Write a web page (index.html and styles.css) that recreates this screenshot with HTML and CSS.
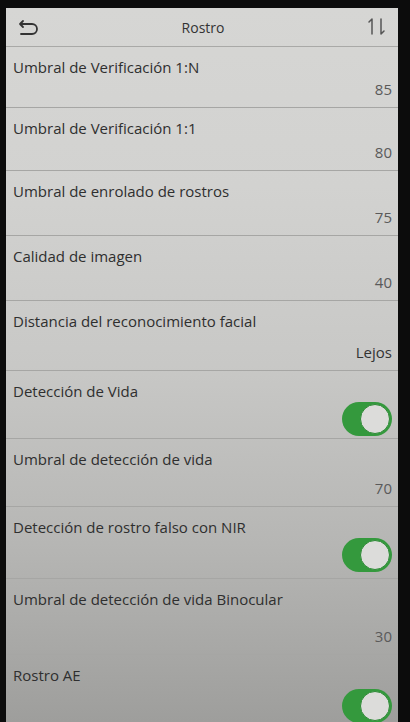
FILE: index.html
```html
<!DOCTYPE html>
<html lang="es">
<head>
<meta charset="utf-8">
<title>Rostro</title>
<link rel="stylesheet" href="styles.css">
</head>
<body>
<div class="screen">
  <header class="topbar">
    <svg class="back" width="22" height="16" viewBox="0 0 22 16"><path d="M5 2 L2 5 L5 8 M2 5 H14 A5 5 0 0 1 14 15 H3" fill="none" stroke="#333" stroke-width="1.8" stroke-linecap="round" stroke-linejoin="round"/></svg>
    <div class="title">Rostro</div>
    <svg class="sort" width="22" height="18" viewBox="0 0 22 18"><path d="M3 4 L6 1 V16 M15 1 V16 L18 13" fill="none" stroke="#555" stroke-width="1.5" stroke-linecap="round" stroke-linejoin="round"/></svg>
  </header>
  <div class="list">
    <div class="row r1"><div class="label">Umbral de Verificación 1:N</div><div class="value">85</div></div>
    <div class="row r2"><div class="label">Umbral de Verificación 1:1</div><div class="value">80</div></div>
    <div class="row r3"><div class="label">Umbral de enrolado de rostros</div><div class="value">75</div></div>
    <div class="row r4"><div class="label">Calidad de imagen</div><div class="value">40</div></div>
    <div class="row r5"><div class="label">Distancia del reconocimiento facial</div><div class="value dark">Lejos</div></div>
    <div class="row r6"><div class="label">Detección de Vida</div><div class="value"><span class="toggle"><span class="knob"></span></span></div></div>
    <div class="row r7"><div class="label">Umbral de detección de vida</div><div class="value">70</div></div>
    <div class="row r8"><div class="label">Detección de rostro falso con NIR</div><div class="value"><span class="toggle"><span class="knob"></span></span></div></div>
    <div class="row r9"><div class="label">Umbral de detección de vida Binocular</div><div class="value">30</div></div>
    <div class="row r10"><div class="label">Rostro AE</div><div class="value"><span class="toggle"><span class="knob"></span></span></div></div>
  </div>
</div>
</body>
</html>
```
FILE: styles.css
```css
html, body {
  margin: 0;
  padding: 0;
  background: #0c0c0c;
  width: 410px;
  height: 722px;
  overflow: hidden;
}
.screen {
  margin: 8px 12px 0 6px;
  height: 714px;
  background: linear-gradient(180deg, #d6d6d4 0%, #d2d2d0 25%, #c8c8c6 50%, #b6b6b4 75%, #9e9e9c 100%);
  font-family: "Open Sans", "DejaVu Sans", sans-serif;
  color: #2e2e2e;
  overflow: hidden;
}
.topbar {
  height: 38px;
  display: flex;
  align-items: center;
  padding: 0 10px 0 12px;
  border-bottom: 1px solid #a9a9a7;
}
.back { flex: none; }
.title {
  flex: 1;
  text-align: center;
  font-size: 14px;
  color: #333;
}
.sort { flex: none; }
.list { display: flex; flex-direction: column; }
.row {
  box-sizing: border-box;
  padding: 9px 6px 7px 7px;
  border-bottom: 1px solid #a6a6a4;
  display: flex;
  flex-direction: column;
  justify-content: space-between;
}
.r1 { height: 61px; }
.r2 { height: 63px; }
.r3 { height: 65px; }
.r4 { height: 65px; }
.r5 { height: 70px; }
.r6 { height: 68px; }
.r7 { height: 68px; }
.r8 { height: 72px; }
.r9 { height: 76px; }
.r10 { height: 80px; border-bottom: none; }
.label {
  font-size: 15px;
  line-height: 22px;
  color: #2f2f2f;
}
.value {
  text-align: right;
  font-size: 15px;
  line-height: 22px;
  color: #5a5a5a;
}
.value.dark { color: #333; }
.toggle {
  display: inline-block;
  position: relative;
  width: 50px;
  height: 34px;
  border-radius: 17px;
  background: #34993d;
  margin-bottom: 5px;
  vertical-align: top;
}
.knob {
  position: absolute;
  right: 2px;
  top: 2px;
  width: 30px;
  height: 30px;
  box-sizing: border-box;
  border-radius: 50%;
  background: #dcdcda;
  border: 1px solid #2d8a35;
}
```
